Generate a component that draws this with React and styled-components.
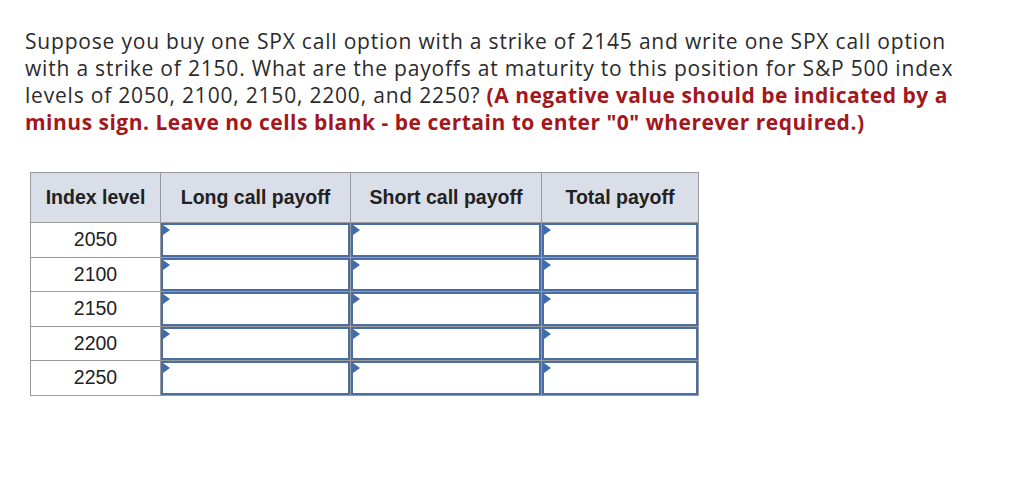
import React from "react";
import styled, { createGlobalStyle } from "styled-components";

const Global = createGlobalStyle`
  html, body { margin: 0; padding: 0; background: #fff; }
  body { width: 1012px; height: 498px; overflow: hidden; }
`;

const Page = styled.div`
  padding: 28px 25px 0 25px;
`;

const Question = styled.p`
  margin: 0;
  font-family: "Open Sans", "Lato", sans-serif;
  font-size: 21px;
  letter-spacing: 0.8px;
  line-height: 27px;
  color: #2b2b2b;
  white-space: nowrap;
`;

const Note = styled.strong`
  color: #a3161b;
  font-weight: 700;
  letter-spacing: 0.5px;
`;

const Table = styled.table`
  margin: 36px 0 0 5px;
  border-collapse: collapse;
  font-family: "Liberation Sans", Arial, sans-serif;
  color: #222;
`;

const Th = styled.th`
  background: #d9dee8;
  border: 1px solid #9a9a9a;
  height: 50px;
  width: ${(p) => p.$w}px;
  padding: 0;
  font-size: 19.5px;
  font-weight: 700;
  text-align: center;
  box-sizing: border-box;
`;

const Td = styled.td`
  border: 1px solid #9a9a9a;
  height: 33.5px;
  padding: 0;
  font-size: 19.5px;
  text-align: center;
`;

const InputTd = styled.td`
  border: 1px solid #9a9a9a;
  padding: 0;
  height: 33.5px;
`;

const InputBox = styled.div`
  position: relative;
  box-sizing: border-box;
  height: 33.5px;
  border: 2px solid #4a6ea3;
  background: #fff;
`;

const Flag = styled.span`
  position: absolute;
  left: 0;
  top: 0;
  width: 0;
  height: 0;
  border-top: 5px solid transparent;
  border-bottom: 5px solid transparent;
  border-left: 7px solid #3f6bb0;
`;

const levels = ["2050", "2100", "2150", "2200", "2250"];

export default function App() {
  return (
    <Page>
      <Global />
      <Question>
        Suppose you buy one SPX call option with a strike of 2145 and write one SPX call option
        <br />
        with a strike of 2150. What are the payoffs at maturity to this position for S&amp;P 500 index
        <br />
        levels of 2050, 2100, 2150, 2200, and 2250?{" "}
        <Note>
          (A negative value should be indicated by a
          <br />
          minus sign. Leave no cells blank - be certain to enter "0" wherever required.)
        </Note>
      </Question>
      <Table>
        <thead>
          <tr>
            <Th $w={130}>Index level</Th>
            <Th $w={190}>Long call payoff</Th>
            <Th $w={191}>Short call payoff</Th>
            <Th $w={157}>Total payoff</Th>
          </tr>
        </thead>
        <tbody>
          {levels.map((l) => (
            <tr key={l}>
              <Td>{l}</Td>
              {[0, 1, 2].map((i) => (
                <InputTd key={i}>
                  <InputBox>
                    <Flag />
                  </InputBox>
                </InputTd>
              ))}
            </tr>
          ))}
        </tbody>
      </Table>
    </Page>
  );
}
